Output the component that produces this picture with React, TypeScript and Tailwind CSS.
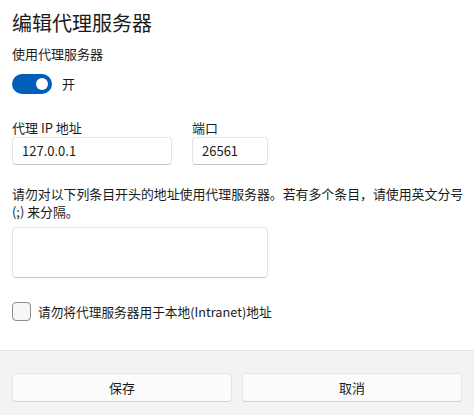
import React from "react";

export default function App() {
  const font = { fontFamily: '"Noto Sans CJK SC", "Noto Sans", sans-serif' };
  return (
    <div
      className="w-[474px] h-[415px] bg-white flex flex-col text-[#1b1b1b] overflow-hidden"
      style={font}
    >
      <div className="flex-1 px-3 pt-[10px]">
        <div className="text-[20px] leading-[26px]">编辑代理服务器</div>
        <div className="mt-[9px] text-[13px] leading-[18px]">使用代理服务器</div>
        <div className="mt-[11px] flex items-center h-5">
          <div className="w-10 h-5 rounded-full bg-[#005fb8] flex items-center justify-end pr-[4px]">
            <div className="w-3 h-3 rounded-full bg-white" />
          </div>
          <span className="ml-[10px] text-[13px] leading-[18px]">开</span>
        </div>
        <div className="mt-[25px] flex gap-5">
          <div className="flex flex-col w-[160px]">
            <div className="text-[13px] leading-[18px]">代理 IP 地址</div>
            <div className="h-[28px] rounded-[4px] border border-[#e5e5e5] border-b-[#c4c4c4] bg-white flex items-center px-[9px] text-[13px]">
              127.0.0.1
            </div>
          </div>
          <div className="flex flex-col w-[76px]">
            <div className="text-[13px] leading-[18px]">端口</div>
            <div className="h-[28px] rounded-[4px] border border-[#e5e5e5] border-b-[#c4c4c4] bg-white flex items-center px-[9px] text-[13px]">
              26561
            </div>
          </div>
        </div>
        <div className="mt-[20px] text-[12.9px] leading-[18px] whitespace-nowrap">
          请勿对以下列条目开头的地址使用代理服务器。若有多个条目，请使用英文分号
          <br />
          (;) 来分隔。
        </div>
        <div className="mt-[6px] w-[256px] h-[51px] rounded-[4px] border border-[#e5e5e5] border-b-[#c4c4c4] bg-white" />
        <div className="mt-[24px] flex items-center">
          <div className="w-[19px] h-[19px] rounded-[4px] border border-[#8d8d8d] bg-[#f7f7f7]" />
          <span className="ml-[7px] text-[12.7px] leading-[18px]">请勿将代理服务器用于本地(Intranet)地址</span>
        </div>
      </div>
      <div className="h-[65px] bg-[#f3f3f3] border-t border-[#e5e5e5] px-3 pt-[22px] flex gap-[10px]">
        <button className="flex-1 h-[29px] rounded-[4px] bg-[#fbfbfb] border border-[#e5e5e5] border-b-[#d0d0d0] text-[13px] text-[#1b1b1b]">
          保存
        </button>
        <button className="flex-1 h-[29px] rounded-[4px] bg-[#fbfbfb] border border-[#e5e5e5] border-b-[#d0d0d0] text-[13px] text-[#1b1b1b]">
          取消
        </button>
      </div>
    </div>
  );
}
